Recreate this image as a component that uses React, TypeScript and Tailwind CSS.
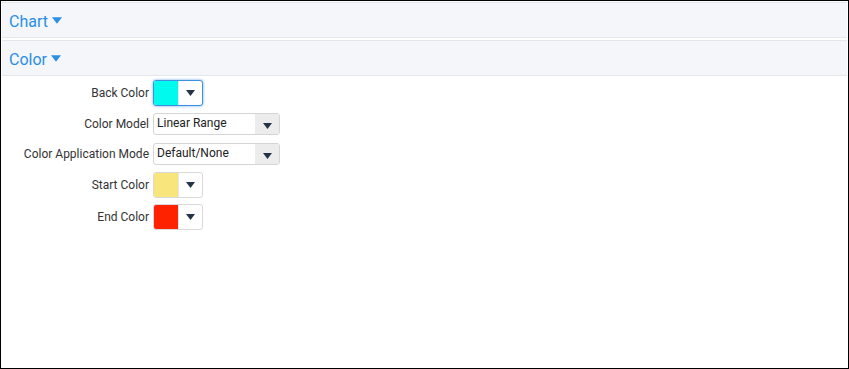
import React from "react";

const Caret = ({ className = "" }: { className?: string }) => (
  <svg width="9" height="6" viewBox="0 0 9 6" className={className}>
    <path d="M0 0 H9 L4.5 6 Z" fill="currentColor" />
  </svg>
);

const SectionHeader = ({ title, className = "" }: { title: string; className?: string }) => (
  <div
    className={`h-[36px] mx-[1px] flex items-center gap-[4px] pl-[7px] pt-[3px] bg-[#f4f6fa] border-y border-[#e3e6eb] text-[16px] text-[#2b8fe3] ${className}`}
  >
    <span className="leading-none">{title}</span>
    <Caret className="mt-[-3px] w-[10px] h-[7px]" />
  </div>
);

const ColorPicker = ({ color, focused = false }: { color: string; focused?: boolean }) => (
  <div
    className={`w-[50px] h-[26px] flex rounded-[3px] bg-white border ${
      focused ? "border-[#3d8fe0] shadow-[0_0_3px_#6aa9ea]" : "border-[#d9d9d9]"
    }`}
  >
    <div className="w-[24px] h-full rounded-l-[2px]" style={{ backgroundColor: color }} />
    <div className="flex-1 flex items-center justify-center border-l border-[#e6e6e6] text-[#243447]">
      <Caret className="w-[9px] h-[6px]" />
    </div>
  </div>
);

const Select = ({ value }: { value: string }) => (
  <div className="w-[127px] h-[22px] flex rounded-[3px] border border-[#d5d5d5] bg-white overflow-hidden">
    <div className="flex-1 pl-[3px] text-[12px] leading-[18px] text-[#222]">{value}</div>
    <div className="w-[24px] flex items-center justify-center bg-[#ececec] text-[#243447]">
      <Caret className="w-[9px] h-[6px] mt-[3px]" />
    </div>
  </div>
);

const Row = ({ label, children, className = "" }: { label: string; children: React.ReactNode; className?: string }) => (
  <div className={`flex items-center ${className}`}>
    <div className="w-[148px] text-right text-[12px] text-[#333]">{label}</div>
    <div className="ml-[4px]">{children}</div>
  </div>
);

export default function App() {
  return (
    <div
      className="w-[849px] h-[369px] border border-black bg-white pt-[1px]"
      style={{ fontFamily: "Roboto, 'Liberation Sans', sans-serif" }}
    >
      <SectionHeader title="Chart" />
      <SectionHeader title="Color" className="mt-[2px]" />
      <div className="flex flex-col">
        <Row label="Back Color" className="mt-[4px]">
          <ColorPicker color="#00fbee" focused />
        </Row>
        <Row label="Color Model" className="mt-[7px]">
          <Select value="Linear Range" />
        </Row>
        <Row label="Color Application Mode" className="mt-[8px]">
          <Select value="Default/None" />
        </Row>
        <Row label="Start Color" className="mt-[7px]">
          <ColorPicker color="#f8e67d" />
        </Row>
        <Row label="End Color" className="mt-[6px]">
          <ColorPicker color="#ff2200" />
        </Row>
      </div>
    </div>
  );
}
